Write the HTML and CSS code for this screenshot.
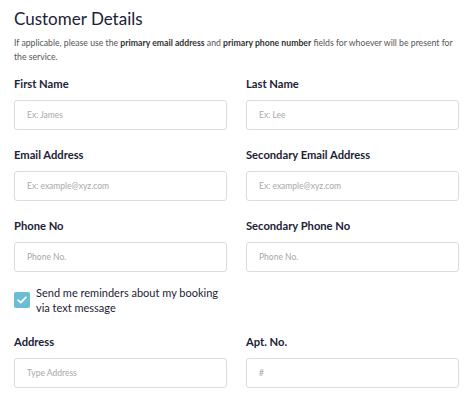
FILE: index.html
```html
<!DOCTYPE html>
<html lang="en">
<head>
    <meta charset="UTF-8">
    <meta name="viewport" content="width=device-width, initial-scale=1.0">
    <title>Customer Details</title>
    <link rel="stylesheet" href="styles.css">
</head>
<body>

    <div class="details">
        <h2>Customer Details</h2>
        <p class="intro">If applicable, please use the <b>primary email address</b> and <b>primary phone number</b> fields for whoever will be present for the service.</p>

        <form class="details-form">
            <div class="field">
                <label for="firstName">First Name</label>
                <input type="text" id="firstName" placeholder="Ex: James">
            </div>
            <div class="field">
                <label for="lastName">Last Name</label>
                <input type="text" id="lastName" placeholder="Ex: Lee">
            </div>

            <div class="field">
                <label for="email">Email Address</label>
                <input type="email" id="email" placeholder="Ex: example@xyz.com">
            </div>
            <div class="field">
                <label for="email2">Secondary Email Address</label>
                <input type="email" id="email2" placeholder="Ex: example@xyz.com">
            </div>

            <div class="field">
                <label for="phone">Phone No</label>
                <input type="tel" id="phone" placeholder="Phone No.">
            </div>
            <div class="field">
                <label for="phone2">Secondary Phone No</label>
                <input type="tel" id="phone2" placeholder="Phone No.">
            </div>

            <label class="reminder">
                <span class="check">
                    <svg width="10" height="8" viewBox="0 0 10 8"><path d="M1.2 4.2 L3.8 6.6 L8.8 1.4" fill="none" stroke="#fff" stroke-width="1.8" stroke-linecap="round" stroke-linejoin="round"/></svg>
                </span>
                <span>Send me reminders about my booking via text message</span>
            </label>
            <div></div>

            <div class="field">
                <label for="address">Address</label>
                <input type="text" id="address" placeholder="Type Address">
            </div>
            <div class="field">
                <label for="apt">Apt. No.</label>
                <input type="text" id="apt" placeholder="#">
            </div>
        </form>
    </div>

</body>
</html>
```

FILE: styles.css
```css
body {
    margin: 0;
    padding: 0;
    font-family: 'Lato', sans-serif;
    background-color: #fff;
    color: #1b2236;
}
.details {
    padding: 6px 15px 0 14px;
}
.details h2 {
    margin: 0;
    font-size: 17px;
    font-weight: 400;
    line-height: 26px;
    color: #1b2236;
}
.intro {
    margin: 4px 0 0;
    font-size: 8.7px;
    line-height: 14px;
    color: #555;
}
.intro b {
    color: #333;
}
.details-form {
    display: grid;
    grid-template-columns: 1fr 1fr;
    column-gap: 19px;
    row-gap: 17px;
    margin-top: 12px;
}
.field label {
    display: block;
    font-size: 11.2px;
    font-weight: 700;
    line-height: 15px;
    margin-bottom: 9px;
    color: #1b2236;
}
.field input {
    box-sizing: border-box;
    width: 100%;
    height: 30px;
    padding: 0 12px;
    border: 1px solid #dcdcdc;
    border-radius: 3px;
    font-family: 'Lato', sans-serif;
    font-size: 8.5px;
    color: #333;
    outline: none;
}
.field input::placeholder {
    color: #a8a8a8;
}
.reminder {
    display: flex;
    align-items: center;
    gap: 6px;
    margin: -4px 0 2px;
    font-size: 11px;
    line-height: 15px;
    color: #1b2236;
}
.check {
    flex: none;
    width: 16px;
    height: 16px;
    border-radius: 2px;
    background-color: #6cbdd8;
    display: flex;
    align-items: center;
    justify-content: center;
}
```
